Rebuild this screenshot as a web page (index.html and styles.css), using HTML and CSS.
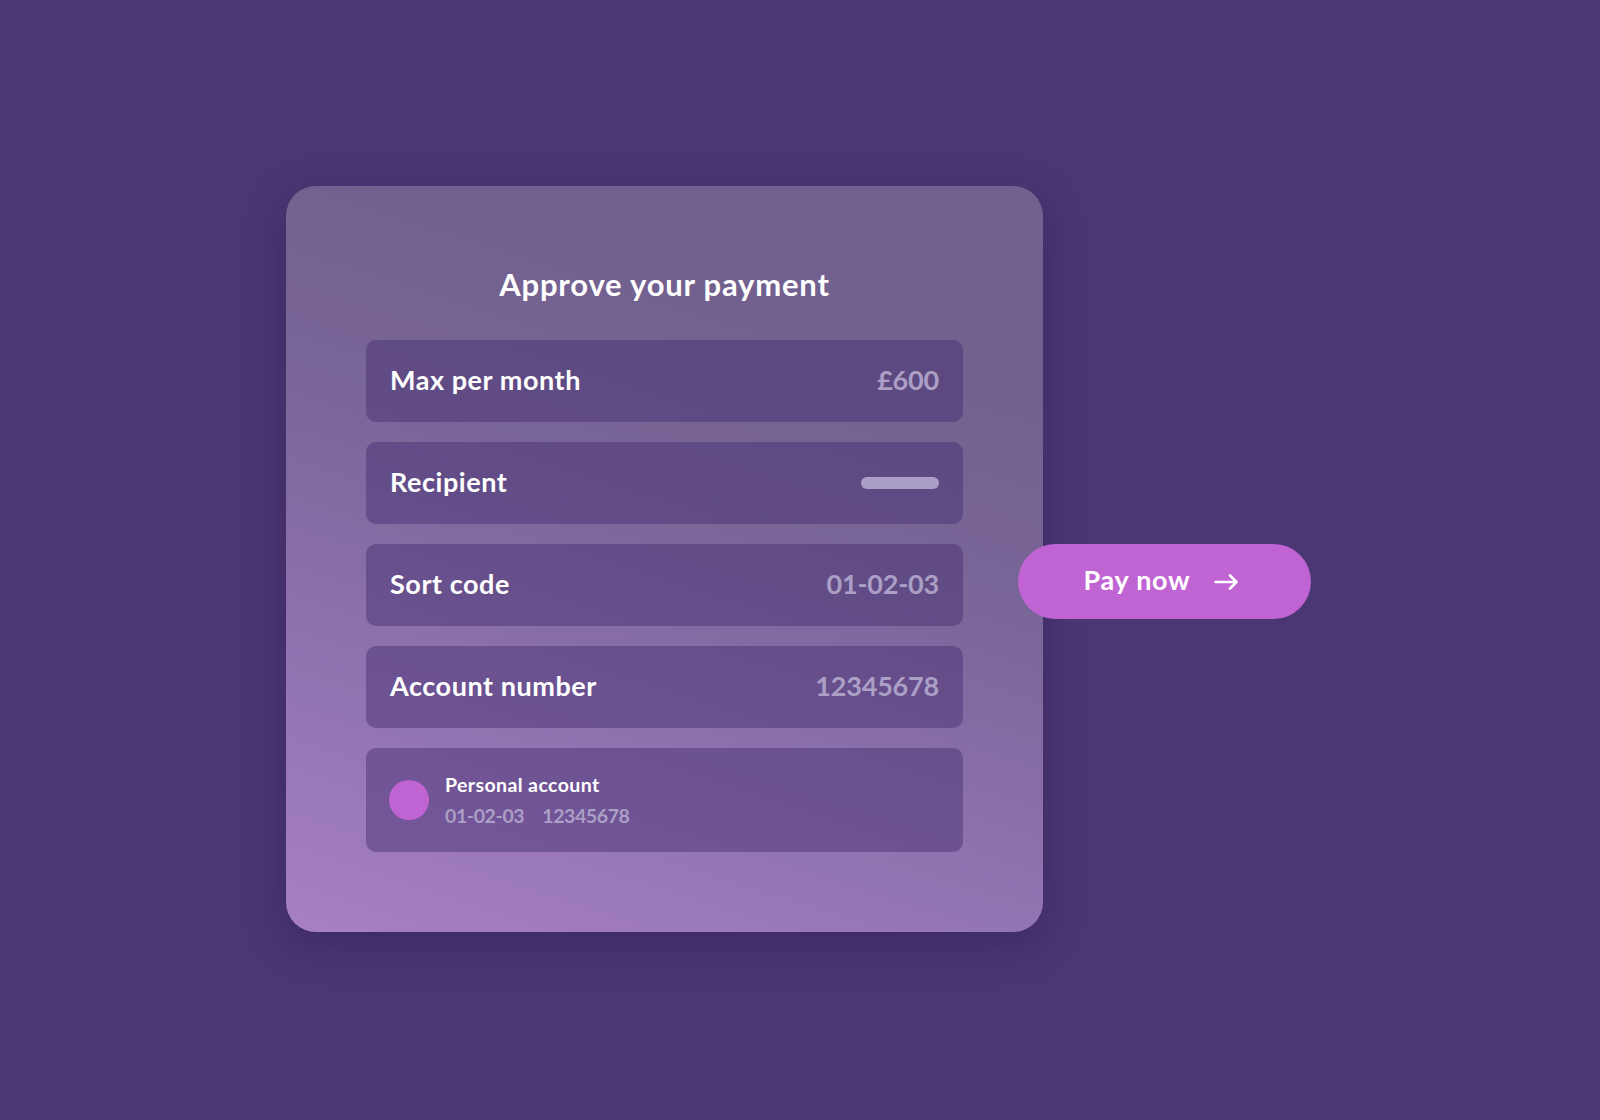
FILE: index.html
```html
<!DOCTYPE html>
<html lang="en">
<head>
<meta charset="utf-8">
<title>Approve your payment</title>
<link rel="stylesheet" href="styles.css">
</head>
<body>
<main class="stage">
  <section class="card">
    <h1 class="card-title">Approve your payment</h1>
    <div class="rows">
      <div class="row">
        <span class="label">Max per month</span>
        <span class="value">£600</span>
      </div>
      <div class="row">
        <span class="label">Recipient</span>
        <span class="placeholder"></span>
      </div>
      <div class="row">
        <span class="label">Sort code</span>
        <span class="value">01-02-03</span>
      </div>
      <div class="row">
        <span class="label">Account number</span>
        <span class="value">12345678</span>
      </div>
      <div class="row row-account">
        <span class="avatar"></span>
        <div class="account-info">
          <div class="account-name">Personal account</div>
          <div class="account-nums"><span>01-02-03</span><span class="acc-no">12345678</span></div>
        </div>
      </div>
    </div>
  </section>
  <button class="pay-btn" type="button">
    <span>Pay now</span>
    <svg class="arrow" width="25" height="16" viewBox="0 0 25 16" aria-hidden="true">
      <path d="M1.5 8 H22.5 M16 1.5 L22.5 8 L16 14.5" fill="none" stroke="#ffffff" stroke-width="2.6" stroke-linecap="round" stroke-linejoin="round"/>
    </svg>
  </button>
</main>
</body>
</html>
```

FILE: styles.css
```css
* { box-sizing: border-box; }

html, body {
  margin: 0;
  padding: 0;
}

body {
  width: 1600px;
  height: 1120px;
  background: #4b3773;
  font-family: "Lato", "Noto Sans", sans-serif;
  color: #ffffff;
  overflow: hidden;
}

.stage {
  display: flex;
  align-items: flex-start;
  padding: 186px 0 0 286px;
}

.card {
  width: 757px;
  padding: 78px 80px 80px;
  border-radius: 30px;
  background: linear-gradient(18deg, #a77fc5 0%, #8d71ad 32%, #7a6699 55%, #72618f 78%, #72618f 100%);
  box-shadow: 0 12px 40px rgba(35, 18, 70, 0.35);
}

.card-title {
  margin: 0 0 36px;
  font-size: 31px;
  line-height: 40px;
  font-weight: 700;
  text-align: center;
  letter-spacing: 0.8px;
}

.rows {
  display: flex;
  flex-direction: column;
  gap: 20px;
}

.row {
  height: 82px;
  display: flex;
  align-items: center;
  justify-content: space-between;
  padding: 0 24px 4px 24px;
  border-radius: 10px;
  background: rgba(67, 45, 110, 0.45);
}

.label {
  font-size: 27px;
  font-weight: 700;
  color: #ffffff;
  letter-spacing: 0.55px;
}

.value {
  font-size: 27px;
  font-weight: 700;
  color: #ab9fc6;
  letter-spacing: -0.2px;
}

.placeholder {
  width: 78px;
  height: 12px;
  margin-top: 4px;
  border-radius: 6px;
  background: #ab9fc6;
}

.row-account {
  height: 104px;
  justify-content: flex-start;
  gap: 16px;
  padding: 0 24px 0 23px;
}

.avatar {
  width: 40px;
  height: 40px;
  border-radius: 50%;
  background: #c064d3;
  flex: none;
}

.account-info {
  display: flex;
  flex-direction: column;
  padding-top: 2px;
}

.account-name {
  font-size: 19.5px;
  line-height: 30px;
  font-weight: 700;
  color: #ffffff;
  letter-spacing: 0.4px;
}

.account-nums {
  font-size: 19.5px;
  line-height: 32px;
  font-weight: 700;
  color: #ab9fc6;
  letter-spacing: -0.4px;
}

.acc-no {
  margin-left: 18px;
}

.pay-btn {
  margin: 358px 0 0 -25px;
  width: 293px;
  height: 75px;
  border: none;
  border-radius: 38px;
  background: #c064d3;
  color: #ffffff;
  font-family: "Lato", "Noto Sans", sans-serif;
  font-size: 27px;
  font-weight: 700;
  letter-spacing: 0.7px;
  display: flex;
  align-items: center;
  justify-content: center;
  gap: 24px;
  padding: 0 6px 4px 0;
  cursor: pointer;
}

.arrow {
  display: block;
  margin-top: 4px;
}
```
